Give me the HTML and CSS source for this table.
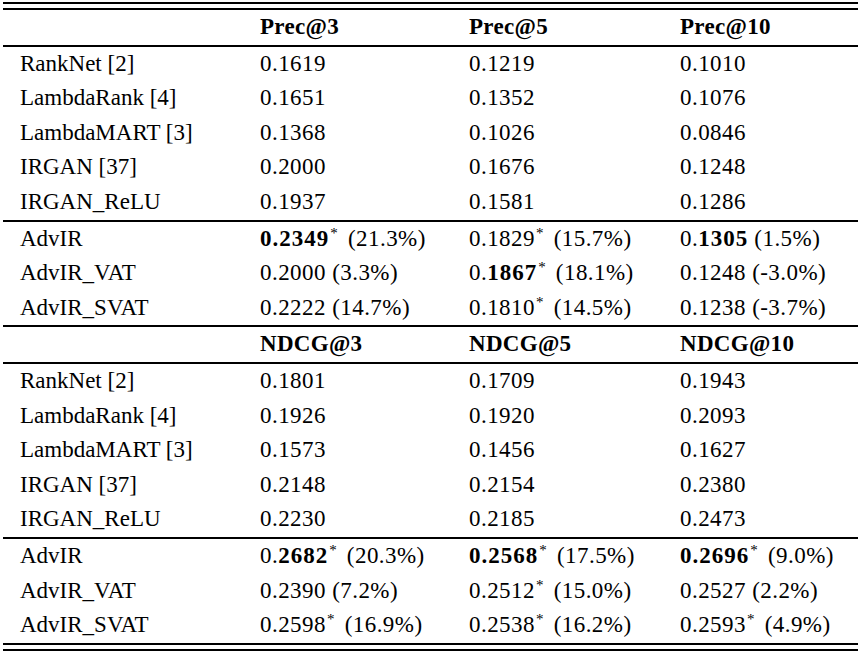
FILE: index.html
```html
<!DOCTYPE html>
<html>
<head>
<meta charset="utf-8">
<link rel="stylesheet" href="styles.css">
</head>
<body>
<div class="frame">
<table class="results">
  <colgroup><col class="c1"><col class="c2"><col class="c3"><col class="c4"></colgroup>
  <tbody>
    <tr class="head"><td></td><td>Prec@3</td><td>Prec@5</td><td>Prec@10</td></tr>
    <tr class="rule"><td>RankNet [2]</td><td>0.1619</td><td>0.1219</td><td>0.1010</td></tr>
    <tr><td>LambdaRank [4]</td><td>0.1651</td><td>0.1352</td><td>0.1076</td></tr>
    <tr><td>LambdaMART [3]</td><td>0.1368</td><td>0.1026</td><td>0.0846</td></tr>
    <tr><td>IRGAN [37]</td><td>0.2000</td><td>0.1676</td><td>0.1248</td></tr>
    <tr><td>IRGAN_ReLU</td><td>0.1937</td><td>0.1581</td><td>0.1286</td></tr>
    <tr class="rule"><td>AdvIR</td><td><b>0.2349</b><sup>*</sup> (21.3%)</td><td>0.1829<sup>*</sup> (15.7%)</td><td>0.<b>1305</b> (1.5%)</td></tr>
    <tr><td>AdvIR_VAT</td><td>0.2000 (3.3%)</td><td>0.<b>1867</b><sup>*</sup> (18.1%)</td><td>0.1248 (-3.0%)</td></tr>
    <tr><td>AdvIR_SVAT</td><td>0.2222 (14.7%)</td><td>0.1810<sup>*</sup> (14.5%)</td><td>0.1238 (-3.7%)</td></tr>
    <tr class="head rule"><td></td><td>NDCG@3</td><td>NDCG@5</td><td>NDCG@10</td></tr>
    <tr class="rule"><td>RankNet [2]</td><td>0.1801</td><td>0.1709</td><td>0.1943</td></tr>
    <tr><td>LambdaRank [4]</td><td>0.1926</td><td>0.1920</td><td>0.2093</td></tr>
    <tr><td>LambdaMART [3]</td><td>0.1573</td><td>0.1456</td><td>0.1627</td></tr>
    <tr><td>IRGAN [37]</td><td>0.2148</td><td>0.2154</td><td>0.2380</td></tr>
    <tr><td>IRGAN_ReLU</td><td>0.2230</td><td>0.2185</td><td>0.2473</td></tr>
    <tr class="rule"><td>AdvIR</td><td>0.<b>2682</b><sup>*</sup> (20.3%)</td><td><b>0.2568</b><sup>*</sup> (17.5%)</td><td><b>0.2696</b><sup>*</sup> (9.0%)</td></tr>
    <tr><td>AdvIR_VAT</td><td>0.2390 (7.2%)</td><td>0.2512<sup>*</sup> (15.0%)</td><td>0.2527 (2.2%)</td></tr>
    <tr><td>AdvIR_SVAT</td><td>0.2598<sup>*</sup> (16.9%)</td><td>0.2538<sup>*</sup> (16.2%)</td><td>0.2593<sup>*</sup> (4.9%)</td></tr>
  </tbody>
</table>
</div>
</body>
</html>
```
FILE: styles.css
```css
html, body {
  margin: 0;
  padding: 0;
  background: #fff;
}
.frame {
  margin: 2px 0 0 3px;
  width: 855px;
  border-top: 2px solid #000;
  border-bottom: 2px solid #000;
  padding: 4px 0;
}
.results {
  width: 855px;
  table-layout: fixed;
  border-collapse: separate;
  border-spacing: 0;
  border-top: 2px solid #000;
  border-bottom: 2px solid #000;
  font-family: "Liberation Serif", "Times New Roman", serif;
  font-size: 23px;
  color: #000;
}
.c1 { width: 240px; }
.c2 { width: 209px; }
.c3 { width: 211px; }
.c4 { width: 195px; }
.results td {
  padding: 0 0 0 17px;
  line-height: 34.6px;
  height: 34.6px;
  white-space: nowrap;
  vertical-align: middle;
}
.results td + td {
  letter-spacing: 0.45px;
}
.results td + td b {
  letter-spacing: 1px;
}
.results tr.head td {
  font-weight: bold;
  letter-spacing: 0.3px;
}
.results tr.rule td {
  border-top: 2px solid #000;
}
.results sup {
  font-size: 15px;
  line-height: 0;
  vertical-align: 8px;
  letter-spacing: 0;
  margin-left: 1px;
  margin-right: 4px;
}
```
